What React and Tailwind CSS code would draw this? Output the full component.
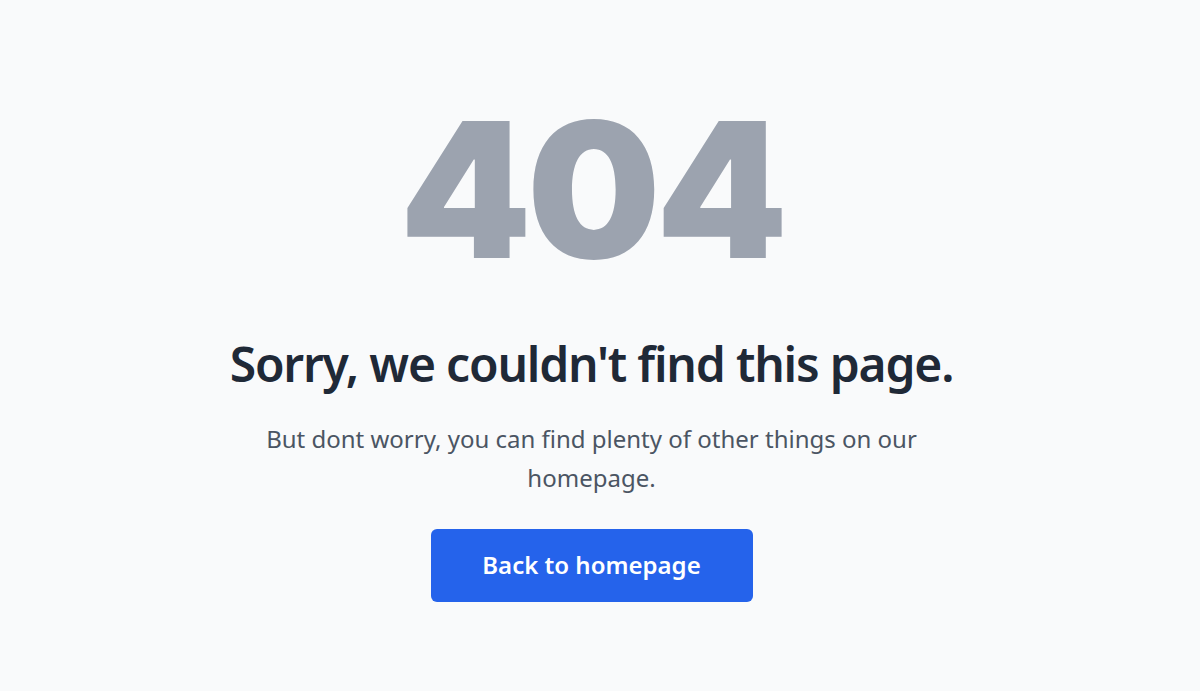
export default function App() {
  return (
    <div
      className="flex min-h-screen flex-col items-center justify-center bg-[#f9fafb] pl-6 pr-[41px] pt-[6px] text-center"
      style={{ fontFamily: '"Noto Sans", "Open Sans", sans-serif' }}
    >
      <h1
        className="text-[188px] font-black leading-none tracking-tight text-[#9ca3af]"
        style={{ fontFamily: 'Inter, "Noto Sans", sans-serif' }}
      >
        404
      </h1>
      <h2 className="mt-[56px] text-5xl font-semibold tracking-tight text-[#1f2937]">
        Sorry, we couldn't find this page.
      </h2>
      <p className="mt-[31px] max-w-2xl text-2xl leading-relaxed text-[#4b5563]">
        But dont worry, you can find plenty of other things on our homepage.
      </p>
      <a
        href="#"
        className="mt-8 inline-flex h-[73px] w-[322px] items-center justify-center rounded-md bg-[#2563eb] text-2xl font-semibold text-white"
      >
        Back to homepage
      </a>
    </div>
  );
}
